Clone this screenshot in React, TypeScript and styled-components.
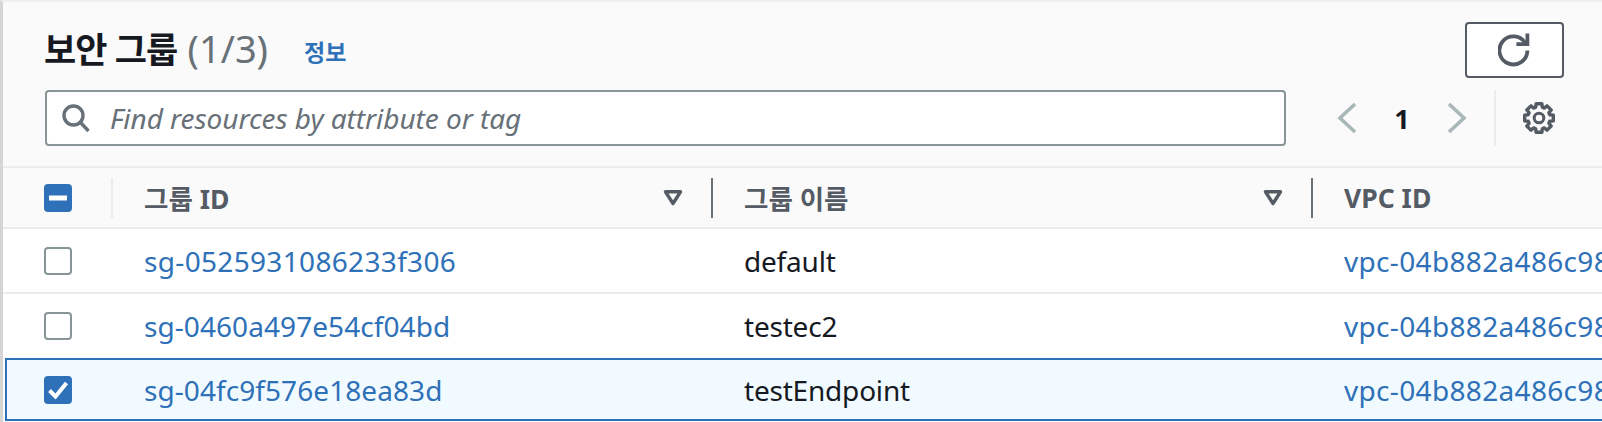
import React from "react";
import styled, { createGlobalStyle } from "styled-components";

const Global = createGlobalStyle`
  html, body { margin: 0; padding: 0; background: #fff; }
  body { width: 1602px; height: 422px; overflow: hidden; font-family: "Noto Sans", "Noto Sans CJK KR", sans-serif; }
`;

const Page = styled.div`
  width: 1602px;
  height: 422px;
  box-sizing: border-box;
  border-top: 2px solid #eeeeee;
  border-left: 3px solid #d5d5d5;
  background: #fafafa;
  overflow: hidden;
`;

const Header = styled.header`
  height: 166px;
  box-sizing: border-box;
  border-bottom: 2px solid #eaeded;
  padding: 20px 38px 0 41px;
  display: flex;
  flex-direction: column;
`;

const TitleRow = styled.div`
  height: 56px;
  display: flex;
  align-items: center;
  justify-content: space-between;
  margin-bottom: 12px;
`;

const TitleGroup = styled.div`
  display: flex;
  align-items: center;
  gap: 36px;
  margin-top: -2px;
`;

const Title = styled.h1`
  margin: 0;
  font-size: 35px;
  font-weight: 700;
  color: #16191f;
  line-height: 44px;
  letter-spacing: -0.9px;
  span { font-weight: 400; color: #687078; letter-spacing: 0; font-size: 38px; margin-left: 2px; }
`;

const InfoLink = styled.a`
  font-size: 23px;
  font-weight: 700;
  color: #2e71b8;
  margin-top: 4px;
`;

const RefreshButton = styled.button`
  width: 99px;
  height: 56px;
  box-sizing: border-box;
  background: #fff;
  border: 2px solid #545b64;
  border-radius: 4px;
  display: flex;
  align-items: center;
  justify-content: center;
  padding: 0;
`;

const ToolRow = styled.div`
  display: flex;
  align-items: center;
  padding-left: 1px;
`;

const SearchBox = styled.div`
  width: 1241px;
  height: 56px;
  box-sizing: border-box;
  background: #fff;
  border: 2px solid #879596;
  border-radius: 4px;
  display: flex;
  align-items: center;
  padding-left: 14px;
  gap: 19px;
`;

const Placeholder = styled.span`
  font-size: 28px;
  font-style: italic;
  color: #687078;
  letter-spacing: -0.05px;
`;

const Pager = styled.div`
  display: flex;
  align-items: center;
  margin-left: 51px;
  width: 130px;
  justify-content: space-between;
`;

const PageNum = styled.span`
  font-size: 27px;
  font-weight: 700;
  color: #16191f;
`;

const ToolDivider = styled.div`
  width: 2px;
  height: 56px;
  background: #eaeded;
  margin-left: 27px;
  margin-right: 26px;
`;

const Grid = styled.div<{ $head?: boolean; $selected?: boolean; $flush?: boolean }>`
  display: grid;
  grid-template-columns: ${(p) => (p.$selected ? "104px" : "108px")} 600px 600px 1fr;
  box-sizing: border-box;
  height: ${(p) => (p.$head ? "61px" : p.$selected ? "63px" : p.$flush ? "64px" : "65px")};
  align-items: center;
  background: ${(p) => (p.$head ? "#fafafa" : p.$selected ? "#f1faff" : "#fff")};
  border-bottom: ${(p) => (p.$flush ? "none" : `2px solid ${p.$selected ? "#2e71b8" : "#eaeded"}`)};
  ${(p) => p.$selected && "border-top: 2px solid #2e71b8; border-left: 2px solid #2e71b8; margin-left: 2px;"}
`;

const SelectCell = styled.div<{ $selected?: boolean }>`
  height: 100%;
  display: flex;
  align-items: center;
  padding-left: ${(p) => (p.$selected ? "37px" : "41px")};
`;

const HeadCell = styled.div<{ $divider?: boolean }>`
  height: 40px;
  display: flex;
  align-items: center;
  justify-content: space-between;
  box-sizing: border-box;
  padding: 0 28px 0 31px;
  border-left: 2px solid ${(p) => (p.$divider ? "#687078" : "#eaeded")};
`;

const HeadLabel = styled.span`
  font-size: 26.5px;
  font-weight: 700;
  color: #545b64;
`;

const BodyCell = styled.div`
  padding-left: 33px;
  white-space: nowrap;
  font-size: 28px;
  color: #16191f;
  letter-spacing: -0.2px;
`;

const RowLink = styled.a<{ $tracking?: number }>`
  color: #2e71b8;
  letter-spacing: ${(p) => p.$tracking ?? 0.33}px;
`;

const Box = styled.span<{ $on?: boolean }>`
  width: 28px;
  height: 28px;
  box-sizing: border-box;
  border-radius: 4px;
  border: 2px solid ${(p) => (p.$on ? "#2e71b8" : "#879596")};
  background: ${(p) => (p.$on ? "#2e71b8" : "#fff")};
  display: flex;
  align-items: center;
  justify-content: center;
`;

const SortIcon = () => (
  <svg width="20" height="16" viewBox="0 0 20 16" fill="none" stroke="#545b64" strokeWidth="3.4">
    <path d="M2.500 1.800h15L10 13.500z" strokeLinejoin="round" />
  </svg>
);

const gearPath = () => {
  const pts: string[] = [];
  const outer = 14.6;
  const inner = 11.2;
  for (let i = 0; i < 8; i++) {
    const c = (i * Math.PI) / 4 - Math.PI / 2;
    [
      [inner, -0.3],
      [outer, -0.2],
      [outer, 0.2],
      [inner, 0.3],
    ].forEach(([r, a]) => {
      pts.push(`${(17 + r * Math.cos(c + a)).toFixed(2)} ${(17 + r * Math.sin(c + a)).toFixed(2)}`);
    });
  }
  return `M${pts.join("L")}z`;
};

const rows = [
  { id: "sg-0525931086233f306", name: "default", tracking: 0.33 },
  { id: "sg-0460a497e54cf04bd", name: "testec2", flush: true, tracking: 0.07 },
  { id: "sg-04fc9f576e18ea83d", name: "testEndpoint", selected: true, tracking: 0.07 },
];

export default function App() {
  return (
    <>
      <Global />
      <Page>
        <Header>
          <TitleRow>
            <TitleGroup>
              <Title>
                보안 그룹 <span>(1/3)</span>
              </Title>
              <InfoLink>정보</InfoLink>
            </TitleGroup>
            <RefreshButton aria-label="refresh">
              <svg width="34" height="34" viewBox="0.800 0 17 17" fill="none" stroke="#545b64" strokeWidth="1.9">
                <path d="M15.500 8.700a7 7 0 1 1-1-3.600" />
                <path d="M10 5.600h5.500V.3" />
              </svg>
            </RefreshButton>
          </TitleRow>
          <ToolRow>
            <SearchBox>
              <svg width="30" height="30" viewBox="0 0 30 30" fill="none" stroke="#687078" strokeWidth="3.4">
                <circle cx="12.500" cy="12.500" r="9.500" />
                <path d="M19.500 19.500l8 8.500" />
              </svg>
              <Placeholder>Find resources by attribute or tag</Placeholder>
            </SearchBox>
            <Pager>
              <svg width="20" height="32" viewBox="0 0 20 32" fill="none" stroke="#aab7b8" strokeWidth="3.6">
                <path d="M18 2L3 16l15 14" />
              </svg>
              <PageNum>1</PageNum>
              <svg width="20" height="32" viewBox="0 0 20 32" fill="none" stroke="#aab7b8" strokeWidth="3.6">
                <path d="M2 2l15 14L2 30" />
              </svg>
            </Pager>
            <ToolDivider />
            <svg width="34" height="34" viewBox="0 0 34 34" fill="none" stroke="#545b64" strokeWidth="3.400" strokeLinejoin="round">
              <path d={gearPath()} />
              <circle cx="17" cy="17" r="4.800" strokeWidth="3" />
            </svg>
          </ToolRow>
        </Header>
        <Grid $head>
          <SelectCell>
            <Box $on>
              <svg width="18" height="6" viewBox="0 0 18 6"><rect y="0.500" width="18" height="5" fill="#fff" /></svg>
            </Box>
          </SelectCell>
          <HeadCell>
            <HeadLabel>그룹 ID</HeadLabel>
            <SortIcon />
          </HeadCell>
          <HeadCell $divider>
            <HeadLabel>그룹 이름</HeadLabel>
            <SortIcon />
          </HeadCell>
          <HeadCell $divider>
            <HeadLabel>VPC ID</HeadLabel>
          </HeadCell>
        </Grid>
        {rows.map((r) => (
          <Grid key={r.id} $selected={r.selected} $flush={r.flush}>
            <SelectCell $selected={r.selected}>
              <Box $on={r.selected}>
                {r.selected && (
                  <svg width="22" height="20" viewBox="0 0 22 20" fill="none" stroke="#fff" strokeWidth="4">
                    <path d="M2.500 10.500l6 6L19.500 3" />
                  </svg>
                )}
              </Box>
            </SelectCell>
            <BodyCell>
              <RowLink $tracking={r.tracking}>{r.id}</RowLink>
            </BodyCell>
            <BodyCell>{r.name}</BodyCell>
            <BodyCell>
              <RowLink>vpc-04b882a486c98a1f2</RowLink>
            </BodyCell>
          </Grid>
        ))}
      </Page>
    </>
  );
}
